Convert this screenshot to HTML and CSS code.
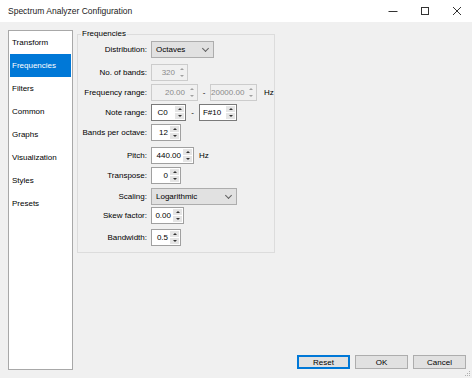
FILE: index.html
```html
<!DOCTYPE html>
<html lang="en">
<head>
    <meta charset="UTF-8">
    <title>Spectrum Analyzer Configuration</title>
    <link rel="stylesheet" href="styles.css">
</head>
<body>

<div class="window">
    <div class="titlebar">
        <span class="title">Spectrum Analyzer Configuration</span>
        <div class="caption-buttons">
            <span class="cap-btn">
                <svg width="10" height="10" viewBox="0 0 10 10"><path d="M0.5 5.5h9" stroke="#333" stroke-width="1"/></svg>
            </span>
            <span class="cap-btn">
                <svg width="10" height="10" viewBox="0 0 10 10"><rect x="1.5" y="1.5" width="7" height="7" fill="none" stroke="#333" stroke-width="1"/></svg>
            </span>
            <span class="cap-btn">
                <svg width="10" height="10" viewBox="0 0 10 10"><path d="M1 1l8 8M9 1l-8 8" stroke="#333" stroke-width="1"/></svg>
            </span>
        </div>
    </div>

    <div class="client">
        <ul class="pages">
            <li>Transform</li>
            <li class="selected">Frequencies</li>
            <li>Filters</li>
            <li>Common</li>
            <li>Graphs</li>
            <li>Visualization</li>
            <li>Styles</li>
            <li>Presets</li>
        </ul>

        <div class="content">
            <fieldset class="group">
                <legend>Frequencies</legend>
                <div class="form">
                    <label>Distribution:</label>
                    <div class="field">
                        <div class="combo combo-distribution"><span>Octaves</span><span class="chevron"></span></div>
                    </div>

                    <label>No. of bands:</label>
                    <div class="field">
                        <div class="spin disabled spin-bands"><span class="spin-value">320</span><span class="spin-buttons"><span class="up"></span><span class="down"></span></span></div>
                    </div>

                    <label>Frequency range:</label>
                    <div class="field">
                        <div class="spin disabled spin-freq"><span class="spin-value">20.00</span><span class="spin-buttons"><span class="up"></span><span class="down"></span></span></div>
                        <span class="dash dash-freq">-</span>
                        <div class="spin disabled spin-freq"><span class="spin-value">20000.00</span><span class="spin-buttons"><span class="up"></span><span class="down"></span></span></div>
                        <span class="unit unit-freq">Hz</span>
                    </div>

                    <label>Note range:</label>
                    <div class="field">
                        <div class="spin strong spin-note-lo"><span class="spin-value centered">C0</span><span class="spin-buttons"><span class="up"></span><span class="down"></span></span></div>
                        <span class="dash dash-note">-</span>
                        <div class="spin strong spin-note-hi"><span class="spin-value centered">F#10</span><span class="spin-buttons"><span class="up"></span><span class="down"></span></span></div>
                    </div>

                    <label>Bands per octave:</label>
                    <div class="field">
                        <div class="spin spin-octave"><span class="spin-value">12</span><span class="spin-buttons"><span class="up"></span><span class="down"></span></span></div>
                    </div>

                    <label>Pitch:</label>
                    <div class="field">
                        <div class="spin spin-pitch"><span class="spin-value">440.00</span><span class="spin-buttons"><span class="up"></span><span class="down"></span></span></div>
                        <span class="unit unit-pitch">Hz</span>
                    </div>

                    <label>Transpose:</label>
                    <div class="field">
                        <div class="spin spin-transpose"><span class="spin-value">0</span><span class="spin-buttons"><span class="up"></span><span class="down"></span></span></div>
                    </div>

                    <label>Scaling:</label>
                    <div class="field">
                        <div class="combo combo-scaling"><span>Logarithmic</span><span class="chevron"></span></div>
                    </div>

                    <label>Skew factor:</label>
                    <div class="field">
                        <div class="spin spin-skew"><span class="spin-value">0.00</span><span class="spin-buttons"><span class="up"></span><span class="down"></span></span></div>
                    </div>

                    <label>Bandwidth:</label>
                    <div class="field">
                        <div class="spin spin-bandwidth"><span class="spin-value">0.5</span><span class="spin-buttons"><span class="up"></span><span class="down"></span></span></div>
                    </div>
                </div>
            </fieldset>

            <div class="buttons">
                <button class="default">Reset</button>
                <button>OK</button>
                <button>Cancel</button>
            </div>
        </div>

        <svg class="grip" width="6" height="6" viewBox="0 0 6 6">
            <rect x="4" y="0" width="1" height="1" fill="#b0b0b0"/>
            <rect x="2" y="2" width="1" height="1" fill="#b0b0b0"/>
            <rect x="4" y="2" width="1" height="1" fill="#b0b0b0"/>
            <rect x="0" y="4" width="1" height="1" fill="#b0b0b0"/>
            <rect x="2" y="4" width="1" height="1" fill="#b0b0b0"/>
            <rect x="4" y="4" width="1" height="1" fill="#b0b0b0"/>
        </svg>
    </div>
</div>

</body>
</html>
```

FILE: styles.css
```css
body {
    margin: 0;
    padding: 0;
    background-color: #ffffff;
    font-family: "Liberation Sans", Arial, sans-serif;
    font-size: 8px;
    color: #000000;
}

.window {
    width: 474px;
    height: 380px;
    background-color: #ffffff;
}

.titlebar {
    height: 22px;
    display: flex;
    align-items: center;
    justify-content: space-between;
}

.title {
    padding-left: 8px;
    font-size: 8.5px;
    color: #1a1a1a;
}

.caption-buttons {
    display: flex;
    height: 22px;
    margin-right: 1px;
}

.cap-btn {
    width: 32px;
    display: flex;
    align-items: center;
    justify-content: center;
}

.client {
    position: relative;
    height: 356px;
    width: 472px;
    box-sizing: border-box;
    background-color: #f0f0f0;
    padding: 8px 6px 8px 8px;
    display: flex;
}

.pages {
    list-style: none;
    margin: 0;
    padding: 0 1px;
    width: 65px;
    box-sizing: border-box;
    background-color: #ffffff;
    border: 1px solid #a8a8a8;
}

.pages li {
    height: 23px;
    line-height: 23px;
    padding-left: 2px;
    white-space: nowrap;
}

.pages li.selected {
    background-color: #0078d7;
    color: #ffffff;
}

.content {
    flex: 1;
    margin-left: 4px;
    display: flex;
    flex-direction: column;
}

.group {
    width: 197px;
    box-sizing: border-box;
    margin: 0;
    padding: 0 0 6px 0;
    border: 1px solid #dcdcdc;
}

.group legend {
    margin-left: 3px;
    padding: 0 1px;
    line-height: 8px;
    font-size: 8px;
}

.form {
    margin-top: 3px;
    display: grid;
    grid-template-columns: 69px auto;
    grid-template-rows: 23px 20px 20px 20px 23px 20px 21px 19px 22px 17px;
    column-gap: 4px;
    align-items: start;
}

.form label {
    text-align: right;
    line-height: 17px;
    white-space: nowrap;
}

.field {
    display: flex;
    align-items: center;
    height: 17px;
}

.combo {
    height: 17px;
    box-sizing: border-box;
    background-color: #e1e1e1;
    border: 1px solid #adadad;
    display: flex;
    align-items: center;
    justify-content: space-between;
    padding: 0 5px 0 4px;
}

.combo-distribution {
    width: 63px;
}

.combo-scaling {
    width: 86px;
}

.chevron {
    width: 4px;
    height: 4px;
    border-right: 1px solid #606060;
    border-bottom: 1px solid #606060;
    transform: rotate(45deg);
    margin-top: -3px;
}

.spin {
    height: 17px;
    box-sizing: border-box;
    background-color: #ffffff;
    border: 1px solid #a0a0a0;
    display: flex;
}

.spin.strong {
    border-color: #7a7a7a;
}

.spin.disabled {
    background-color: #f0f0f0;
    border-color: #cccccc;
    color: #8a8a8a;
}

.spin-value {
    flex: 1;
    text-align: right;
    line-height: 15px;
    padding-right: 2px;
}

.spin-value.centered {
    text-align: center;
}

.spin-buttons {
    width: 9px;
    display: flex;
    flex-direction: column;
    gap: 1px;
    margin: 1px 1px 1px 0;
}

.spin-buttons span {
    flex: 1;
    background-color: #e5e5e5;
    display: flex;
    align-items: center;
    justify-content: center;
}

.spin.disabled .spin-buttons span {
    background-color: #f0f0f0;
}

.spin-buttons .up::before,
.spin-buttons .down::before {
    content: "";
    border-left: 2px solid transparent;
    border-right: 2px solid transparent;
}

.spin-buttons .up::before {
    border-bottom: 2px solid #333333;
}

.spin-buttons .down::before {
    border-top: 2px solid #333333;
}

.spin.disabled .spin-buttons .up::before {
    border-bottom-color: #a0a0a0;
}

.spin.disabled .spin-buttons .down::before {
    border-top-color: #a0a0a0;
}

.spin-bands { width: 37px; }
.spin-freq { width: 47px; }
.spin-note-lo { width: 35px; }
.spin-note-hi { width: 38px; }
.spin-octave { width: 30px; }
.spin-pitch { width: 43px; }
.spin-transpose { width: 30px; }
.spin-skew { width: 33px; }
.spin-bandwidth { width: 30px; }

.dash {
    text-align: center;
}

.dash-freq { width: 12px; }
.dash-note { width: 13px; }

.unit-freq { margin-left: 7px; }
.unit-pitch { margin-left: 5px; }

.buttons {
    margin-top: auto;
    margin-bottom: 1px;
    display: flex;
    justify-content: flex-end;
    gap: 5px;
}

.buttons button {
    width: 53px;
    height: 14px;
    padding: 0;
    font-family: "Liberation Sans", Arial, sans-serif;
    font-size: 8px;
    color: #000000;
    background-color: #e1e1e1;
    border: 1px solid #adadad;
}

.buttons button.default {
    border-color: #0078d7;
    box-shadow: inset 0 0 0 1px #0078d7;
}

.grip {
    position: absolute;
    right: 1px;
    bottom: 1px;
}
```
